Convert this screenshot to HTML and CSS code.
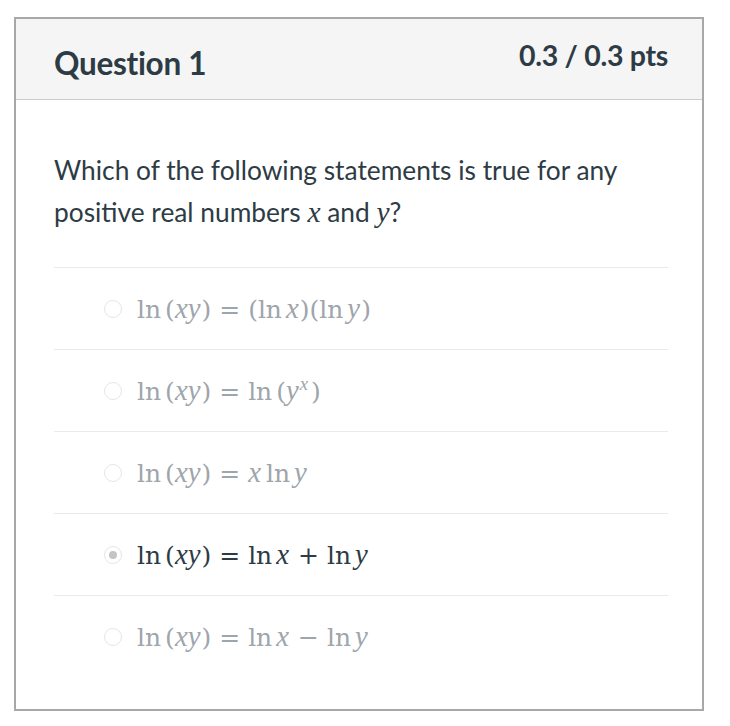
FILE: index.html
```html
<!DOCTYPE html>
<html>
<head>
<meta charset="utf-8">
<link rel="stylesheet" href="styles.css">
</head>
<body>
<div class="card">
  <div class="header">
    <h2 class="title">Question 1</h2>
    <div class="pts">0.3 / 0.3 pts</div>
  </div>
  <div class="content">
    <p class="question">Which of the following statements is true for any positive real numbers <span class="mi">x</span> and <span class="mi">y</span>?</p>
    <div class="answers">
      <div class="answer">
        <span class="radio"></span>
        <span class="math">ln<span class="sp"></span>(<span class="mi">xy</span>)<span class="rel">=</span>(ln<span class="sp"></span><span class="mi">x</span>)(ln<span class="sp"></span><span class="mi">y</span>)</span>
      </div>
      <div class="answer">
        <span class="radio"></span>
        <span class="math">ln<span class="sp"></span>(<span class="mi">xy</span>)<span class="rel">=</span>ln<span class="sp"></span>(<span class="mi">y</span><sup class="mi sup">x</sup>)</span>
      </div>
      <div class="answer">
        <span class="radio"></span>
        <span class="math">ln<span class="sp"></span>(<span class="mi">xy</span>)<span class="rel">=</span><span class="mi">x</span><span class="sp"></span>ln<span class="sp"></span><span class="mi">y</span></span>
      </div>
      <div class="answer selected">
        <span class="radio"><span class="dot"></span></span>
        <span class="math">ln<span class="sp"></span>(<span class="mi">xy</span>)<span class="rel">=</span>ln<span class="sp"></span><span class="mi">x</span><span class="bin">+</span>ln<span class="sp"></span><span class="mi">y</span></span>
      </div>
      <div class="answer">
        <span class="radio"></span>
        <span class="math">ln<span class="sp"></span>(<span class="mi">xy</span>)<span class="rel">=</span>ln<span class="sp"></span><span class="mi">x</span><span class="bin">&minus;</span>ln<span class="sp"></span><span class="mi">y</span></span>
      </div>
    </div>
  </div>
</div>
</body>
</html>
```
FILE: styles.css
```css
html, body {
  margin: 0;
  padding: 0;
  background: #ffffff;
}
body {
  padding: 17px 26px 0 14px;
  font-family: Lato, "Open Sans", sans-serif;
  color: #2d3b45;
}
.card {
  width: 686px;
  height: 690px;
  border: 2px solid #a8a8a8;
  display: flex;
  flex-direction: column;
}
.header {
  height: 80px;
  background: #f5f5f5;
  border-bottom: 1px solid #c7cdd1;
  display: flex;
  justify-content: space-between;
  padding: 0 34px 0 38px;
}
.title {
  margin: 0;
  font-size: 31.5px;
  font-weight: 700;
  line-height: 1;
  padding-top: 29px;
  letter-spacing: -0.3px;
}
.pts {
  font-size: 28.5px;
  font-weight: 700;
  line-height: 1;
  padding-top: 22px;
  letter-spacing: -0.3px;
  color: #2d3b45;
}
.content {
  padding: 49px 34px 0 38px;
}
.question {
  margin: 0 0 34px 0;
  font-size: 26.3px;
  line-height: 42px;
}
.question .mi {
  font-size: 1.12em;
}
.mi {
  font-family: "Liberation Serif", "DejaVu Serif", serif;
  font-style: italic;
}
.answers {
  display: flex;
  flex-direction: column;
}
.answer {
  height: 81px;
  border-top: 1px solid #e8eaec;
  display: flex;
  align-items: center;
  padding-left: 50px;
  color: #9ea5ab;
}
.answer.selected {
  color: #2d3b45;
}
.radio {
  width: 16px;
  height: 16px;
  border: 1px solid #e6e6e6;
  border-radius: 50%;
  background: #fff;
  display: flex;
  align-items: center;
  justify-content: center;
  margin-right: 15px;
  flex: none;
}
.dot {
  width: 8px;
  height: 8px;
  border-radius: 50%;
  background: #c4c4c4;
}
.math {
  font-family: "DejaVu Serif", "Liberation Serif", serif;
  font-size: 25px;
  line-height: 1;
  white-space: nowrap;
}
.math .mi {
  font-size: 1.15em;
  padding-right: 1px;
}
.sp {
  display: inline-block;
  width: 4px;
}
.rel, .bin {
  padding: 0 8px;
}
.math .sup {
  font-size: 0.75em;
  vertical-align: 0.55em;
  line-height: 0;
  padding-right: 3px;
}
```
